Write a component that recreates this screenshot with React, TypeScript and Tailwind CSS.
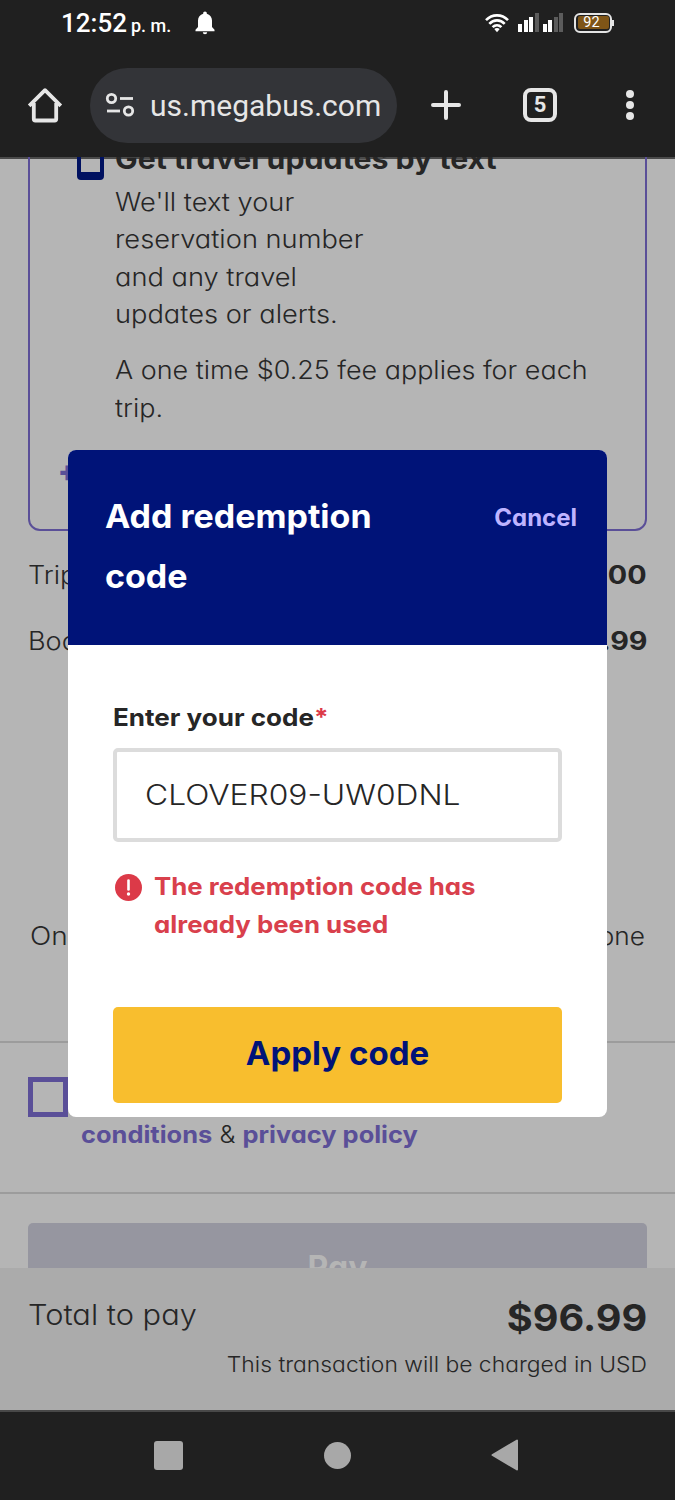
const signalOne = ["h-2 bg-white", "h-3 bg-white", "h-[15px] bg-white", "h-[19px] bg-[#5c5c5c]"];
const signalTwo = ["h-2 bg-white", "h-3 bg-white", "h-[15px] bg-[#5c5c5c]", "h-[19px] bg-[#5c5c5c]"];

function Signal({ bars }: { bars: string[] }) {
  return (
    <div className="flex items-end gap-[1.5px]">
      {bars.map((bar, i) => (
        <span key={i} className={`w-[4px] ${bar}`} />
      ))}
    </div>
  );
}

function StatusBar() {
  return (
    <div className="flex h-[45px] items-center pl-[61px] pr-[61px] text-white">
      <div className="flex items-baseline font-[Roboto,sans-serif] font-medium">
        <span className="text-[26px] leading-[48px]">12:52</span>
        <span className="ml-1 text-[18px]">p. m.</span>
      </div>
      <svg className="ml-[24px]" width="20" height="24" viewBox="0 0 20 24" fill="currentColor">
        <path d="M10 0.5c-1.1 0-1.8.8-1.8 1.8v.5C5 3.600 3 6.200 3 9.500v6.500L.5 18.800v1.500h19v-1.500L17 16V9.500c0-3.300-2-5.900-5.200-6.700v-.5c0-1-.7-1.800-1.800-1.800zM7.800 21.300a2.200 2 0 0 0 4.400 0z" />
      </svg>
      <div className="ml-auto flex items-center">
        <svg width="24" height="20" viewBox="0 0 24 20" fill="none" stroke="currentColor" strokeWidth="2.600">
          <path d="M1 7.200C7.200.8 16.800.8 23 7.200" />
          <path d="M4.300 10.900c4.400-4.700 11-4.700 15.400 0" />
          <path d="M7.600 14.200c2.500-2.600 6.300-2.600 8.800 0" />
          <path d="M9.300 16c1.600-1.500 3.800-1.500 5.400 0L12 19.200z" fill="currentColor" stroke="none" />
        </svg>
        <div className="ml-[9px] flex gap-[4px]">
          <Signal bars={signalOne} />
          <Signal bars={signalTwo} />
        </div>
        <div className="ml-[11px] flex items-center">
          <div className="h-[20px] w-[38px] rounded-[6px] border-2 border-[#e4e4e4] p-[1.500px]">
            <div className="h-full rounded-[2px] bg-[#7f5517] pr-[3px] text-center font-[Roboto,sans-serif] text-[14.500px] leading-[14px]">92</div>
          </div>
          <span className="h-[6px] w-[2px] bg-[#e4e4e4]" />
        </div>
      </div>
    </div>
  );
}

function BrowserBar() {
  return (
    <div className="flex h-[112px] items-center pl-[27px] text-[#e6e6e6]">
      <svg className="mt-[8px]" width="36" height="36" viewBox="0 0 36 36" fill="none" stroke="currentColor" strokeWidth="3.800" strokeLinejoin="round">
        <path d="M2.200 18.800 18 3.200l15.800 15.600" />
        <path d="M6.800 16v16a1.500 1.500 0 0 0 1.500 1.500h19.400a1.500 1.500 0 0 0 1.500-1.500V16" />
      </svg>
      <div className="ml-[27px] mt-[8px] flex h-[75px] w-[307px] items-center rounded-full bg-[#333438] pl-[15px]">
        <svg className="shrink-0" width="30" height="26" viewBox="0 0 30 26" fill="none" stroke="currentColor" strokeWidth="2.800">
          <circle cx="6.500" cy="6.500" r="4.200" />
          <path d="M15 6.500h13" />
          <path d="M2 19h13" />
          <circle cx="23.500" cy="19" r="4.200" />
        </svg>
        <span className="ml-[15px] mt-[2px] font-[Roboto,sans-serif] text-[30px] leading-[36px]">us.megabus.com</span>
      </div>
      <svg className="ml-[34px] mt-[8px]" width="30" height="30" viewBox="0 0 30 30" stroke="currentColor" strokeWidth="4" strokeLinecap="round">
        <path d="M15 2v26M2 15h26" />
      </svg>
      <div className="ml-[62px] mt-[8px] flex h-[34px] w-[34px] items-center justify-center rounded-[8px] border-4 border-current font-[Roboto,sans-serif] text-[22px] font-bold leading-none">
        5
      </div>
      <div className="ml-[69px] mt-[8px] flex flex-col gap-[3px]">
        <span className="size-[8px] rounded-full bg-current" />
        <span className="size-[8px] rounded-full bg-current" />
        <span className="size-[8px] rounded-full bg-current" />
      </div>
    </div>
  );
}

function PriceRow({ label, price }: { label: string; price: string }) {
  return (
    <div className="flex h-[66px] items-center justify-between">
      <span className="origin-left scale-x-[1.085]">{label}</span>
      <span className="origin-right scale-x-[1.150] font-bold">{price}</span>
    </div>
  );
}

function CheckoutPage() {
  return (
    <div className="text-[25px] font-light leading-[37.500px]">
      <div className="px-7">
        <section className="-mt-[40px] h-[412px] rounded-xl border-2 border-[#5a4f98] pl-[47px] pt-[20px]">
          <div className="flex">
            <div className="mt-[0px] h-[39px] w-[27px] shrink-0 rounded-[4px] border-x-[4px] border-b-[8px] border-t-[5px] border-[#001160]" />
            <div className="ml-[11px]">
              <h2 className="origin-left scale-x-[1.080] whitespace-nowrap text-[28px] font-bold">Get travel updates by text</h2>
              <p className="mt-[5px] w-[248px] origin-left scale-x-[1.090]">We'll text your reservation number and any travel updates or alerts.</p>
              <p className="mt-[18.500px] w-[450px] origin-left scale-x-[1.077]">A one time $0.25 fee applies for each trip.</p>
            </div>
          </div>
          <div className="-ml-[19px] mt-[28px] text-[28px] font-black text-[#5a4f98]">+ Add</div>
        </section>
        <div className="mt-[12px]">
          <PriceRow label="Trip price" price="$93.00" />
          <PriceRow label="Booking fee" price="$3.99" />
        </div>
        <div className="mt-[243px] flex justify-between px-[2px]">
          <span className="origin-left scale-x-[1.120]">Only</span>
          <span className="origin-right scale-x-[1.050]">one</span>
        </div>
      </div>

      <div className="mt-[85px] flex h-[153px] border-y-2 border-[#9c9c9c] pl-7 pt-[34px]">
        <div className="size-[40px] shrink-0 border-[5px] border-[#5a4f98]" />
        <p className="ml-[13px] mt-[2px] w-[420px] origin-left scale-x-[1.060] text-[24px]">
          I accept the <b className="font-bold text-[#5a4f98]">terms,</b>
          <br />
          <b className="font-bold text-[#5a4f98]">conditions</b> &amp; <b className="font-bold text-[#5a4f98]">privacy policy</b>
        </p>
      </div>

      <div className="px-7 pt-[29px]">
        <button className="h-[91px] w-full rounded-[5px] bg-[#9696a0] text-[32px] font-bold text-[#b5b5b5]">Pay</button>
      </div>
    </div>
  );
}

function TotalBar() {
  return (
    <footer className="absolute inset-x-0 bottom-0 h-[142px] bg-[#ababab] px-7 pt-[25px] font-light">
      <div className="flex items-center justify-between">
        <span className="-mt-[7px] origin-left scale-x-[1.100] text-[28px]">Total to pay</span>
        <span className="origin-right scale-x-[1.070] text-[37px] font-bold leading-[50px]">$96.99</span>
      </div>
      <p className="mt-[5px] origin-right scale-x-[1.040] whitespace-nowrap text-right text-[22px] leading-[32px]">This transaction will be charged in USD</p>
    </footer>
  );
}

function RedemptionModal() {
  return (
    <div className="absolute left-[68px] top-[293px] h-[667px] w-[539px] overflow-hidden rounded-[8px] bg-white">
      <div className="flex h-[195px] justify-between bg-[#001378] pl-[37px] pr-[30px] pt-[36px] font-bold">
        <h1 className="w-[280px] origin-left scale-x-[1.030] text-[33px] leading-[60px] text-white">Add redemption code</h1>
        <button className="h-[64px] text-[24px] text-[#beb4ff]">Cancel</button>
      </div>
      <div className="px-[45px] pt-[54px]">
        <label className="block origin-left scale-x-[1.085] text-[24px] font-bold leading-[38px]">
          Enter your code<span className="text-[#dc3a48]">*</span>
        </label>
        <div className="mt-[11px] h-[94px] rounded-[5px] border-[4px] border-[#dcdcdc] px-[28px]">
          <input
            className="block h-[84px] w-[340px] origin-left scale-x-[1.115] text-[28.500px] font-light outline-none"
            defaultValue="CLOVER09-UW0DNL"
          />
        </div>
        <div className="mt-[26px] flex text-[24px] font-bold leading-[37.500px] text-[#d9404c]">
          <svg className="ml-[2px] mt-[6px] shrink-0" width="27" height="27" viewBox="0 0 27 27">
            <circle cx="13.500" cy="13.500" r="13.500" fill="#dc3a48" />
            <path d="M13.500 6.500v9" stroke="#fff" strokeWidth="2.600" strokeLinecap="round" />
            <circle cx="13.500" cy="20" r="1.700" fill="#fff" />
          </svg>
          <p className="ml-[12px] w-[320px] origin-left scale-x-[1.075]">The redemption code has already been used</p>
        </div>
        <button className="mt-[64px] block h-[96px] w-full rounded-[5px] bg-[#f8be2e] pb-[3px] text-[33px] font-bold text-[#001378]">
          Apply code
        </button>
      </div>
    </div>
  );
}

function NavBar() {
  return (
    <nav className="flex h-[88px] items-center bg-[#202020] pb-[2px] pl-[154px] text-[#a8a8a8]">
      <span className="size-[29px] rounded-[3px] bg-current" />
      <span className="ml-[141px] size-[27px] rounded-full bg-current" />
      <svg className="ml-[140px]" width="28" height="32" viewBox="0 0 28 32" fill="currentColor" stroke="currentColor" strokeWidth="2" strokeLinejoin="round">
        <path d="M1.500 16 26 1.500v29z" />
      </svg>
    </nav>
  );
}

export default function App() {
  return (
    <div className="flex h-[1500px] w-[675px] flex-col overflow-hidden bg-[#202020] font-[Inter,sans-serif] text-[#262626] [font-feature-settings:'cv11']">
      <header>
        <StatusBar />
        <BrowserBar />
      </header>
      <main className="relative h-[1253px] overflow-hidden bg-[#b5b5b5]">
        <div className="h-[2px] bg-[#4a4a4a]" />
        <CheckoutPage />
        <TotalBar />
        <RedemptionModal />
      </main>
      <div className="h-[2px] bg-[#484848]" />
      <NavBar />
    </div>
  );
}
